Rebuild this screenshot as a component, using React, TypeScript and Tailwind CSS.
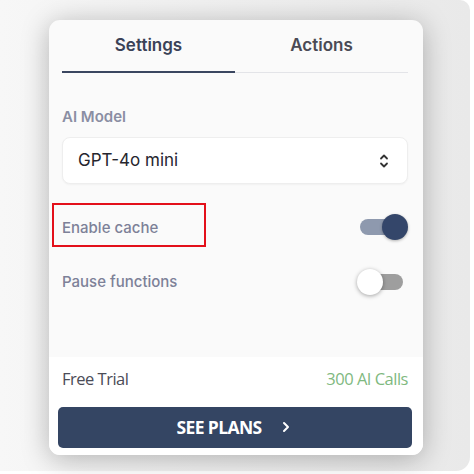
import { ChevronRight } from "lucide-react";

const inter = { fontFamily: "Inter, 'Noto Sans', sans-serif" };

function Toggle({ on }: { on: boolean }) {
  return (
    <div className="relative w-[51px] h-[26px] shrink-0">
      <div
        className={
          on
            ? "absolute left-[3px] top-[5px] w-[40px] h-[16px] rounded-full bg-[#8e99ae]"
            : "absolute left-[3px] top-[5px] w-[43px] h-[16px] rounded-full bg-[#9e9e9e]"
        }
      />
      <div
        className={
          on
            ? "absolute right-0 top-0 w-[26px] h-[26px] rounded-full bg-[#34466a] shadow-[0_1px_3px_rgba(0,0,0,0.3)]"
            : "absolute left-0 top-0 w-[26px] h-[26px] rounded-full bg-white shadow-[0_1px_4px_rgba(0,0,0,0.35)]"
        }
      />
    </div>
  );
}

function UpDown() {
  return (
    <svg width="10" height="16" viewBox="0 0 10 16" fill="none" stroke="#333" strokeWidth="1.8" strokeLinecap="round" strokeLinejoin="round">
      <path d="M2 5.5 L5 2.5 L8 5.5" />
      <path d="M2 10.5 L5 13.5 L8 10.5" />
    </svg>
  );
}

export default function App() {
  return (
    <div className="w-[474px] h-[474px] bg-white">
      <div className="w-[470px] h-[471px] rounded-br-[14px] rounded-tr-[10px] bg-gradient-to-r from-[#f7f7f7] to-[#e9e9e9] pt-[20px] pl-[49px]">
        <div className="w-[374px] h-[435px] rounded-[11px] bg-[#fafafa] shadow-[0_4px_28px_rgba(0,0,0,0.28)] flex flex-col overflow-hidden" style={inter}>
          {/* tabs */}
          <div className="flex pl-[13px] pr-[15px]">
            <div className="flex-1 flex flex-col items-center">
              <div className="pt-[12px] pb-[13px] text-[17px] leading-[26px] font-semibold text-[#3a4257]">Settings</div>
              <div className="h-[2px] w-full bg-[#3a4660]" />
            </div>
            <div className="flex-1 flex flex-col items-center">
              <div className="pt-[12px] pb-[13px] text-[17px] leading-[26px] font-semibold text-[#4a4a55]">Actions</div>
              <div className="h-[2px] w-full flex items-end">
                <div className="h-[1px] w-full bg-[#e3e4e8]" />
              </div>
            </div>
          </div>

          {/* settings */}
          <div className="flex flex-col pl-[13px] pr-[15px] flex-1">
            <div className="mt-[34px] text-[15px] leading-[20px] font-semibold text-[#8a8ea3]">AI Model</div>
            <div className="mt-[10px] h-[47px] rounded-[8px] bg-white border border-[#eeeeee] shadow-[0_1px_2px_rgba(0,0,0,0.04)] flex items-center justify-between pl-[15px] pr-[18px]">
              <span className="text-[17px] text-[#26262e]">GPT-4o mini</span>
              <UpDown />
            </div>

            <div className="mt-[21px] h-[44px] flex items-center justify-between">
              <div className="relative">
                <span className="text-[15px] font-medium text-[#7d8198]">Enable cache</span>
                <span className="absolute left-[-10px] top-[-12px] w-[154px] h-[44px] border-2 border-[#e3101a]" />
              </div>
              <Toggle on />
            </div>

            <div className="mt-[11px] h-[44px] flex items-center justify-between">
              <span className="text-[15px] font-medium text-[#7d8198]">Pause functions</span>
              <Toggle on={false} />
            </div>
          </div>

          {/* footer */}
          <div className="bg-white h-[98px] flex flex-col" style={{ fontFamily: "'Open Sans', sans-serif" }}>
            <div className="flex justify-between items-center pl-[13px] pr-[15px] pt-[10px]">
              <span className="text-[16.5px] tracking-[-0.5px] text-[#4b4c57]">Free Trial</span>
              <span className="text-[16.5px] tracking-[-0.5px] text-[#7fb97f]">300 AI Calls</span>
            </div>
            <div className="mt-[15px] ml-[9px] mr-[11px] h-[41px] rounded-[5px] bg-[#344563] flex items-center justify-center gap-[16px] text-white">
              <span className="text-[17.5px] font-bold tracking-[-0.6px]">SEE PLANS</span>
              <ChevronRight size={16} strokeWidth={3} />
            </div>
          </div>
        </div>
      </div>
    </div>
  );
}
